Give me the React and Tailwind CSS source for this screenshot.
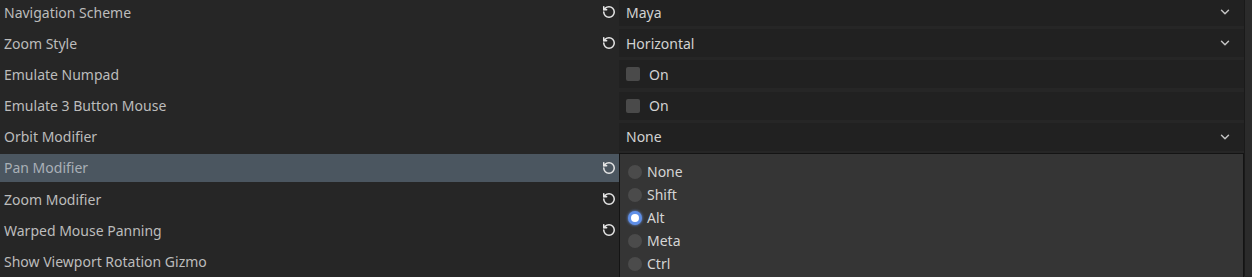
import { RotateCcw, ChevronDown } from 'lucide-react';

const rows = [
  { label: 'Navigation Scheme', revert: true, kind: 'select', value: 'Maya' },
  { label: 'Zoom Style', revert: true, kind: 'select', value: 'Horizontal' },
  { label: 'Emulate Numpad', kind: 'check', value: 'On' },
  { label: 'Emulate 3 Button Mouse', kind: 'check', value: 'On' },
  { label: 'Orbit Modifier', kind: 'select', value: 'None' },
  { label: 'Pan Modifier', revert: true, kind: 'select', value: 'Alt', active: true },
  { label: 'Zoom Modifier', revert: true, kind: 'select', value: 'Ctrl' },
  { label: 'Warped Mouse Panning', revert: true, kind: 'select', value: 'On' },
  { label: 'Show Viewport Rotation Gizmo', kind: 'check', value: 'On' },
];

const options = ['None', 'Shift', 'Alt', 'Meta', 'Ctrl'];

function Row({ row }) {
  return (
    <div className="flex h-[28px] items-stretch">
      <div
        className={`w-[619px] shrink-0 flex items-center justify-between pl-[4px] pr-[3px] ${
          row.active ? 'bg-[#4b5660] text-[#a9b0b7]' : 'text-[#bcbcbc]'
        }`}
      >
        <span>{row.label}</span>
        {row.revert && <RotateCcw className="h-[14px] w-[14px] text-[#e6e6e6]" strokeWidth={2.6} />}
      </div>
      <div className="flex-1 flex items-center bg-[#212121] pl-[7px] pr-[12px] text-[#d2d2d2]">
        {row.kind === 'select' && (
          <>
            <span className="flex-1">{row.value}</span>
            <ChevronDown className="h-[14px] w-[14px] text-[#c4c4c4]" strokeWidth={2.5} />
          </>
        )}
        {row.kind === 'check' && (
          <>
            <span className="h-[14px] w-[14px] rounded-[2px] bg-[#4a4a4a] mr-[9px]" />
            <span>{row.value}</span>
          </>
        )}
      </div>
    </div>
  );
}

export default function App() {
  return (
    <div
      className="relative h-[277px] w-[1252px] overflow-hidden bg-[#262626] text-[14px]"
      style={{ fontFamily: '"Noto Sans", "Open Sans", sans-serif' }}
    >
      <div className="flex">
        <div className="flex-1 flex flex-col gap-[3.2px] mt-[-2px]">
          {rows.map((r) => (
            <Row key={r.label} row={r} />
          ))}
        </div>
        {/* scrollbar strip */}
        <div className="w-[8px] shrink-0 border-l border-[#1a1a1a] bg-[#2b2b2b]" />
      </div>

      {/* open dropdown popup */}
      <div className="absolute left-[619px] top-[153px] w-[625px] h-[130px] bg-[#353535] border border-[#141414] pt-[6px] pl-[8px]">
        {options.map((o) => (
          <div key={o} className="flex h-[23px] items-center text-[#d4d4d4]">
            {o === 'Alt' ? (
              <span className="h-[14px] w-[14px] rounded-full bg-[#5f8fe8] flex items-center justify-center mr-[5px] shadow-[0_0_3px_#6f9cf0]">
                <span className="h-[8px] w-[8px] rounded-full bg-white" />
              </span>
            ) : (
              <span className="h-[14px] w-[14px] rounded-full bg-[#4b4b4b] mr-[5px]" />
            )}
            <span>{o}</span>
          </div>
        ))}
      </div>
    </div>
  );
}
